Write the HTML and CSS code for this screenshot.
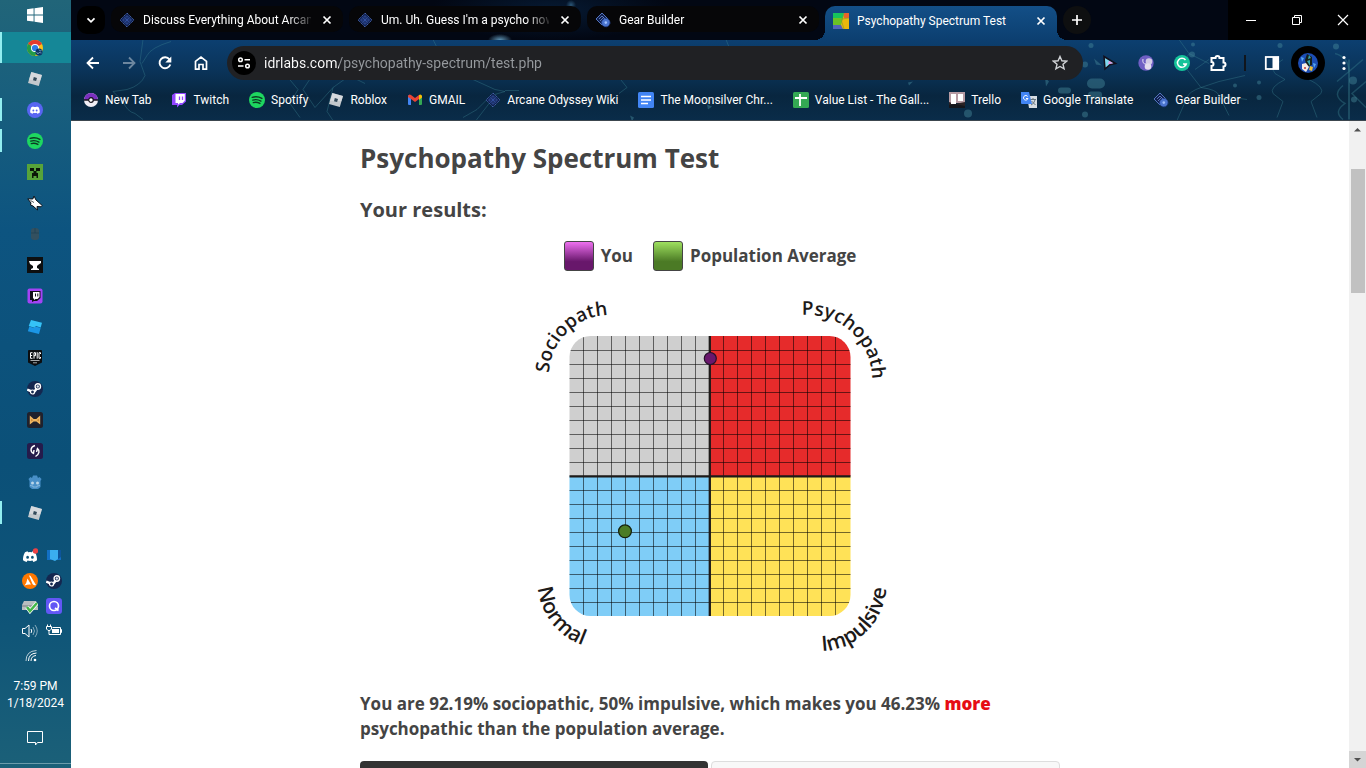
FILE: index.html
```html
<!DOCTYPE html>
<html lang="en">
<head>
    <meta charset="UTF-8">
    <meta name="viewport" content="width=device-width, initial-scale=1.0">
    <title>Psychopathy Spectrum Test</title>
    <link rel="stylesheet" href="styles.css">
</head>
<body>
    <!-- Shared icons -->
    <svg class="sprite" aria-hidden="true">
        <symbol id="i-arcane" viewBox="0 0 16 16">
            <path d="M8 1l7 7-7 7-7-7z" fill="#10204e" stroke="#4361a8" stroke-dasharray="1.5 .7"/>
            <path d="M8 3.5L12.5 8 8 12.5 3.5 8zM5.5 5.5l5 5m0-5l-5 5M8 4v8M4 8h8" fill="none" stroke="#3554a4" stroke-width=".8"/>
        </symbol>
        <symbol id="i-gear" viewBox="0 0 16 16">
            <path d="M7 1l6 6-6 6-6-6z" fill="#10204e" stroke="#5474bd"/>
            <path d="M4 7l3-3 3 3M5 9l4-4" fill="none" stroke="#6c8bd0" stroke-width=".8"/>
            <circle cx="10.8" cy="10.6" r="4.2" fill="#4a74cf" stroke="#24418d" stroke-dasharray="1.5 .8"/>
            <circle cx="10.8" cy="10.6" r="1.3" fill="#9fc0ff"/>
        </symbol>
        <symbol id="i-close" viewBox="0 0 16 16">
            <path d="M4.5 4.5l7 7m0-7l-7 7" stroke="#fff" stroke-width="1.7"/>
        </symbol>
        <symbol id="i-roblox" viewBox="0 0 16 16">
            <path d="M4.300 1L15 3.900 11.800 15 1 12z" fill="#c3c8cc"/>
            <path d="M4.300 1L15 3.900l-1.600 5.400L1.900 8.800z" fill="#e2e5e7" opacity=".6"/>
            <path d="M6.800 6l3.200.9-.9 3.100-3.100-.8z" fill="#334a5a"/>
        </symbol>
        <symbol id="i-spotify" viewBox="0 0 16 16">
            <circle cx="8" cy="8" r="8" fill="#1ed760"/>
            <path d="M3.200 5.400c3.300-1 6.800-.6 9.700 1M3.800 8.100c2.800-.8 5.700-.4 8.100 1M4.300 10.600c2.300-.6 4.600-.3 6.600.8" fill="none" stroke="#0b3b22" stroke-width="1.400" stroke-linecap="round"/>
        </symbol>
        <symbol id="i-twitch" viewBox="0 0 16 16">
            <path d="M1 3l3-2h11v8.500L11 13H8.500L6 15.500V13H1z" fill="#9146ff"/>
            <path d="M4.500 2h9.300v6.800l-2.300 2.200H9l-2 1.800V11H4.500z" fill="#fff"/>
            <path d="M8.500 4.500v3.500M11.500 4.500v3.500" stroke="#9146ff" stroke-width="1.300"/>
        </symbol>
        <symbol id="i-discord" viewBox="0 0 16 16">
            <path d="M5.500 2.800L3 3.800C1.400 6.300.9 9 1 11.700c1 .9 2.300 1.500 3.600 1.800l.9-1.500c1.600.5 3.400.5 5 0l.9 1.500c1.300-.3 2.600-.9 3.600-1.800.1-2.700-.4-5.400-2-7.900l-2.500-1-.6 1a9 9 0 0 0-3.800 0zM5.600 7.200a1.400 1.500 0 1 1 0 3 1.400 1.500 0 0 1 0-3zm4.800 0a1.400 1.500 0 1 1 0 3 1.400 1.500 0 0 1 0-3z" fill="#fff" fill-rule="evenodd"/>
        </symbol>
        <symbol id="i-steam" viewBox="0 0 16 16">
            <circle cx="8" cy="8" r="8" fill="#14274f"/>
            <path d="M.2 8.500l5 2.200 2.400-.4 3-3.700" fill="none" stroke="#fff" stroke-width="2.400"/>
            <circle cx="10.800" cy="5.500" r="2.700" fill="#14274f" stroke="#fff" stroke-width="1.400"/>
            <circle cx="10.800" cy="5.500" r="1.200" fill="#dfe7f0"/>
            <circle cx="5.500" cy="11" r="2" fill="#14274f" stroke="#fff" stroke-width="1.200"/>
        </symbol>
    </svg>

    <nav class="taskbar" aria-label="Taskbar">
        <button class="task start" aria-label="Start">
            <svg viewBox="0 0 16 16"><path d="M0 2.300L6.600 1.300v6.200H0zM7.500 1.200L16 0v7.500H7.500zM0 8.400h6.600v6.200L0 13.700zM7.500 8.400H16V16l-8.500-1.200z" fill="#fff"/></svg>
        </button>
        <button class="task current" aria-label="Google Chrome">
            <svg viewBox="0 0 16 16">
                <circle cx="8" cy="8" r="8" fill="#fbc116"/>
                <path d="M8 8L1.070 4A8 8 0 0 1 14.930 4z" fill="#e33b2e"/>
                <path d="M8 8L1.070 4A8 8 0 0 0 8 16l3.500-6z" fill="#229a4a"/>
                <circle cx="8" cy="8" r="4" fill="#fff"/><circle cx="8" cy="8" r="3.100" fill="#2f7de9"/>
                <circle cx="12" cy="12" r="3.500" fill="#0b3264"/>
                <path d="M9.500 12l1.500 2 1-1.500 2.500.5M12 9.500l1 1.500 1.500-.5" fill="none" stroke="#8fb6cc" stroke-width=".7"/>
            </svg>
        </button>
        <button class="task" aria-label="Roblox"><svg><use href="#i-roblox"/></svg></button>
        <button class="task open" aria-label="Discord">
            <svg viewBox="0 0 16 16"><circle cx="8" cy="8" r="8" fill="#5865f2"/><use href="#i-discord" x="2.500" y="2.500" width="11" height="11"/></svg>
        </button>
        <button class="task open" aria-label="Spotify"><svg><use href="#i-spotify"/></svg></button>
        <button class="task" aria-label="Minecraft">
            <svg viewBox="0 0 16 16"><path d="M0 0h16v16H0z" fill="#57a33a"/><path d="M3 4h4v3H3zM9 4h4v3H9zM6.500 7h3v2H11v5H9.500v-2h-3v2H5V9h1.500z" fill="#0b1508"/></svg>
        </button>
        <button class="task" aria-label="Wolf">
            <svg viewBox="0 0 16 16"><path d="M.8 3.800l5 .2L7 1l2 4 6.200 5.500-1.200 1.300-4-.3.500 3.500-4.500-4-2.500-1 .5-2z" fill="#fff" stroke="#0a0f16"/><path d="M3.500 5.500l3.500 2" stroke="#0a0f16" stroke-width=".7"/></svg>
        </button>
        <button class="task" aria-label="Mouse">
            <svg viewBox="0 0 16 16"><rect x="4" y="2" width="8" height="12" rx="3" fill="#33505f"/><path d="M4 7h8M8 2v5" stroke="#1b3c50" stroke-width=".6"/></svg>
        </button>
        <button class="task" aria-label="Anvil">
            <svg viewBox="0 0 16 16"><path d="M0 0h16v16H0z" fill="#0d0f10"/><path d="M2 4h12v2l-3 2-1 1v2l2 1v1H4v-1l2-1V9L3 7z" fill="#fff"/></svg>
        </button>
        <button class="task" aria-label="Twitch">
            <svg viewBox="0 0 16 16"><rect x=".5" y=".5" width="15" height="15" rx="2" fill="#a343f5"/><path d="M3 3h10.500v7L10 13H7l-2 1v-2H3z" fill="#101018"/><path d="M6 4h6.500v5l-2 2H8.500L7 12v-1.500H6z" fill="#fff"/><path d="M8.500 5.500v3M10.800 5.500v3" stroke="#101018"/></svg>
        </button>
        <button class="task" aria-label="Roblox Studio">
            <svg viewBox="0 0 16 16"><path d="M4 1l11 2.800-1.300 4.600-5-1.300-.5 1.800L1.700 7z" fill="#35c3f7"/><path d="M2.300 7.600l5 1.300.5-1.500 5.900 1.300L12 15 .9 12.200z" fill="#1b96e6"/></svg>
        </button>
        <button class="task" aria-label="Epic Games">
            <svg viewBox="0 0 16 16"><path d="M2 0h12q1 0 1 1v11.500L8 16l-7-3.500V1q0-1 1-1z" fill="#0c0e10"/><path d="M5.500 2.700h-2v5.600h2M3.500 5.500h1.700M7 8.700V2.700h1.500v3H7M10.200 2.200v6.500M13.500 4V2.700H12v5.600h1.500V7" fill="none" stroke="#fff"/><path d="M3.500 10.500h9M6 12.800h4" stroke="#a5a8aa"/></svg>
        </button>
        <button class="task" aria-label="Steam"><svg><use href="#i-steam"/></svg></button>
        <button class="task" aria-label="Mod manager">
            <svg viewBox="0 0 16 16"><rect width="16" height="16" rx="2.500" fill="#20212c"/><path d="M3.500 5v6l3-2.300h3l3 2.300V5l-3 2.700h-3z" fill="#c98538" stroke="#f0b660" stroke-width="1.400"/></svg>
        </button>
        <button class="task" aria-label="Streaming">
            <svg viewBox="0 0 16 16"><rect width="16" height="16" rx="2.500" fill="#251b4b"/><path d="M8 2.500C3 4 3 8.500 6.500 10.500L7 7M8.500 13.500c4-2.500 4.500-6 2-8L9.500 9" fill="none" stroke="#fff" stroke-width="1.400"/></svg>
        </button>
        <button class="task" aria-label="Godot">
            <svg viewBox="0 0 16 16"><path d="M1.500 5l2-2 1.500 1 1-2.500h4L11 4l1.500-1 2 2L13.500 7v6L11 15H5l-2.500-2V7z" fill="#488fc7"/><circle cx="5.500" cy="9" r="1.500" fill="#b9d5e8"/><circle cx="10.500" cy="9" r="1.500" fill="#b9d5e8"/><path d="M3 11.500l3 .5v1h4v-1l3-.5" fill="none" stroke="#8fbfdf" stroke-width=".8"/></svg>
        </button>
        <button class="task open" aria-label="Roblox Player"><svg><use href="#i-roblox"/></svg></button>

        <div class="tray">
            <svg viewBox="0 0 16 16"><use href="#i-discord" width="16" height="17"/><circle cx="13.500" cy="3" r="2.700" fill="#ed4245"/></svg>
            <svg viewBox="0 0 16 16"><path d="M1 2h14v10H1z" fill="#126fc4"/><path d="M4 2h8v9l-3 2-5-2z" fill="#3aaef0"/><path d="M12 2h3v7l-3 2z" fill="#0d549a"/></svg>
            <svg viewBox="0 0 16 16"><circle cx="8" cy="8" r="8" fill="#ff7800"/><path d="M7 2.500q1.500-.5 2.500 2L14 12q-2 .8-3.500-1zM5.500 5.500L9 11.500q-3-.5-6.500 1 2-2 3-7z" fill="#fff"/></svg>
            <svg><use href="#i-steam"/></svg>
            <svg viewBox="0 0 16 16"><path d="M2 3h12l2 4v5H0V7z" fill="#b9bdc0"/><path d="M0 8h16" stroke="#777c80"/><path d="M5 9l3 4 7-8" fill="none" stroke="#fff" stroke-width="4"/><path d="M5 9l3 4 7-8" fill="none" stroke="#44b749" stroke-width="2.600"/></svg>
            <svg viewBox="0 0 16 16"><rect width="16" height="16" rx="3" fill="#6257f5"/><circle cx="8" cy="8" r="4.500" fill="none" stroke="#fff" stroke-width="1.700"/><path d="M9 10l3.500 2.500" stroke="#fff" stroke-width="1.700"/></svg>
            <svg viewBox="0 0 16 16" fill="none" stroke="#fff"><path d="M.5 5.500h2.500l4-3.500v12l-4-3.500H.5z"/><path d="M9 6q1.500 2 0 4"/><path d="M11 4q3 4 0 8M13 2q4.500 6 0 12" opacity=".5"/></svg>
            <svg viewBox="0 0 16 16" fill="none" stroke="#fff"><path d="M6.500 4.500h8v7h-10M14.500 6.500h1v3h-1M1.500 1.500v2M4.500 1.500v2M.5 3.500h5V6L4 7.500H2L.5 6zM3 7.500v4h2"/><path d="M6 6h7v4H6z" fill="#fff" stroke="none"/></svg>
            <svg class="wifi" viewBox="0 0 16 16" fill="none" stroke="#fff"><circle cx="11" cy="12" r="1.300" fill="#fff" stroke="none"/><path d="M7 13q0-5 5-5.500M4.500 13q0-7.500 8-8"/><path d="M2 13Q2 3 12.500 2.500" opacity=".7"/></svg>
        </div>
        <div class="clock"><span>7:59 PM</span><span>1/18/2024</span></div>
        <button class="notify" aria-label="Notifications">
            <svg viewBox="0 0 16 16"><path d="M.5 1.500h15v11h-5L8.500 15v-2.500h-8z" fill="none" stroke="#fff"/></svg>
        </button>
    </nav>

    <div class="browser">
        <header class="chrome">
            <div class="tabs">
                <button class="round" aria-label="Search tabs"><svg viewBox="0 0 16 16"><path d="M4.500 6.300L8 9.800l3.500-3.500" fill="none" stroke="#fff" stroke-width="1.700"/></svg></button>
                <div class="tab">
                    <svg><use href="#i-arcane"/></svg>
                    <a href="#">Discuss Everything About Arcan</a>
                    <button aria-label="Close tab"><svg><use href="#i-close"/></svg></button>
                </div>
                <div class="tab">
                    <svg><use href="#i-arcane"/></svg>
                    <a href="#">Um. Uh. Guess I'm a psycho now</a>
                    <button aria-label="Close tab"><svg><use href="#i-close"/></svg></button>
                </div>
                <div class="tab">
                    <svg><use href="#i-gear"/></svg>
                    <a href="#">Gear Builder</a>
                    <button aria-label="Close tab"><svg><use href="#i-close"/></svg></button>
                </div>
                <div class="tab active">
                    <svg viewBox="0 0 16 16"><path d="M0 0h16v16H0z" fill="#e9b70c"/><path d="M0 0h11l-1 5H0z" fill="#16c45c"/><path d="M0 5h10l-2 7H0z" fill="#6bc224"/><path d="M0 12h8l2 4H0z" fill="#5264b8"/><path d="M11 0h5v5h-5z" fill="#e7632a"/><path d="M11 0L8.500 8l2.500 8M9 6l7-1" fill="none" stroke="#7e9634" stroke-width=".6"/></svg>
                    <a href="#">Psychopathy Spectrum Test</a>
                    <button aria-label="Close tab"><svg><use href="#i-close"/></svg></button>
                </div>
                <button class="round new-tab" aria-label="New tab"><svg viewBox="0 0 16 16"><path d="M8 3v10M3 8h10" stroke="#fff" stroke-width="1.700"/></svg></button>
                <div class="window-controls">
                    <button aria-label="Minimize"><svg viewBox="0 0 16 16"><path d="M3 8.500h10" stroke="#fff"/></svg></button>
                    <button aria-label="Restore"><svg viewBox="0 0 16 16" fill="none" stroke="#fff"><path d="M3.500 5.500h7v7h-7zM5.500 5.500v-2h7v7h-2"/></svg></button>
                    <button aria-label="Close window"><svg viewBox="0 0 16 16"><path d="M3 3l10 10m0-10L3 13" stroke="#fff" stroke-width="1.200"/></svg></button>
                </div>
            </div>

            <div class="bars">
                <!-- Theme artwork behind the toolbar -->
                <svg class="art" viewBox="0 0 1295 81" preserveAspectRatio="xMaxYMid slice" aria-hidden="true">
                    <g fill="none" stroke="#3a7f8f" stroke-opacity=".4">
                        <path d="M72 0l-3 22 5 14q-4 10-18 14l-14 2 10 10q4 10 12 12l8 6M100 2Q80 8 76 16l-5 8"/>
                        <path d="M217 38l10 12-8 14 10 14M240 38l-8 12 12 18 18-20 14-10M262 48l-6 24 6 9M362 0l4 8M282 38l12 6"/>
                        <path d="M402 40l22 10 10 2-14 4-14 14-14 8M434 51h14M405 81l20-26M548 38l8 10-8 6M655 0l4 10"/>
                        <path d="M1108 0l10 14q-6 8-2 16l14 18q-12 4-14 10l-10 23M1130 48q16 2 18 8l10 20M1130 48l18-6 26-6M1148 56l28 4M1118 14l20 10M1124 30l14-10"/>
                        <path d="M1212 20q-14 8-8 14l10 6q-16 8-12 14l10 8-6 16M1240 20q14 8 8 14l-10 6q16 8 12 14l-10 8 6 16"/>
                        <path d="M1264 14q14 4 14 18l-12 10M1292 20l-14 12M1272 46q-12 10 2 18q-12 8-2 16M1295 42l-14 12 14 14" stroke-width="1.500"/>
                        <path d="M1278 20v60" stroke-width="2"/>
                    </g>
                    <g fill="#48899b" fill-opacity=".45">
                        <rect x="1016" y="39" width="18" height="10" rx="5"/><rect x="1017" y="52" width="14" height="7" rx="3"/><rect x="987" y="48" width="13" height="6" rx="3"/>
                        <circle cx="1014" cy="25" r="3"/><circle cx="1020" cy="6" r="2.500"/><circle cx="1014" cy="75" r="3"/><circle cx="897" cy="74" r="4"/>
                        <circle cx="1121" cy="15" r="3"/><circle cx="1122" cy="5" r="2"/><circle cx="1188" cy="43" r="2"/><circle cx="1188" cy="58" r="2.500"/><circle cx="1164" cy="46" r="2"/>
                        <circle cx="1209" cy="6" r="2.500"/><circle cx="1282" cy="41" r="4"/><circle cx="1283" cy="60" r="3"/><circle cx="1265" cy="7" r="3"/>
                        <path d="M1023 19l8 7-6-1zM837 43l5-1-4 4zM974 38l4 4-3 5zM559 76l4 2-2 4zM636 65l5 2-4 3z"/>
                    </g>
                </svg>
                <div class="toolbar">
                    <button aria-label="Back"><svg viewBox="0 0 16 16"><path d="M14 8H3M8 2.500L2.500 8 8 13.500" fill="none" stroke="#fff" stroke-width="1.800"/></svg></button>
                    <button aria-label="Forward" class="dim"><svg viewBox="0 0 16 16"><path d="M2 8h11M8 2.500L13.500 8 8 13.500" fill="none" stroke="#fff" stroke-width="1.800"/></svg></button>
                    <button aria-label="Reload"><svg viewBox="0 0 16 16"><path d="M12.500 4.500A5.500 5.500 0 1 0 13.300 9.500" fill="none" stroke="#fff" stroke-width="1.900"/><path d="M14.300 1.500v6h-6z" fill="#fff"/></svg></button>
                    <button aria-label="Home"><svg viewBox="0 0 16 16"><path d="M2.500 14.200V6.300L8 2l5.500 4.300v7.900H10V9.500H6v4.700z" fill="none" stroke="#fff" stroke-width="1.700"/></svg></button>
                    <form class="omnibox">
                        <button type="button" class="site" aria-label="View site information"><svg viewBox="0 0 16 16" fill="none" stroke="#fff" stroke-width="1.500"><circle cx="4.500" cy="4.700" r="1.800"/><path d="M8.500 4.700H14M2 11h5.500"/><circle cx="11.500" cy="11" r="1.800"/></svg></button>
                        <input class="url" type="text" aria-label="Address" value="idrlabs.com/psychopathy-spectrum/test.php">
                        <button type="button" class="star" aria-label="Bookmark this tab"><svg viewBox="0 0 16 16"><path d="M8 1.500l1.900 4.300 4.700.4-3.600 3.100 1.100 4.600L8 11.500l-4.100 2.400L5 9.300 1.400 6.200l4.700-.4z" fill="none" stroke="#d0d3d6" stroke-width="1.400"/></svg></button>
                    </form>
                    <button aria-label="Cursor"><svg viewBox="0 0 16 16"><path d="M2 1.500l11.500 7-5.500 1.200L3 14z" fill="#7fd6ee" stroke="#13101d" stroke-width="1.500"/><path d="M6 9l5-.8-4-2.200z" fill="#ef8fe0"/></svg></button>
                    <button aria-label="Moon"><svg viewBox="0 0 16 16"><circle cx="8" cy="8" r="7.700" fill="#6f5fc4"/><path d="M5 4q-1 5 3 5" fill="none" stroke="#e7e3f6"/><circle cx="11" cy="6.500" r="3.300" fill="#d3cbe6"/><circle cx="10" cy="11.500" r="3.300" fill="#e3dcee"/></svg></button>
                    <button aria-label="Grammarly"><svg viewBox="0 0 16 16"><circle cx="8" cy="8" r="8" fill="#15c39a"/><path d="M11.500 5A4.500 4.500 0 1 0 12.300 9H9M10.500 10.500L12.400 8.800" fill="none" stroke="#fff" stroke-width="1.500"/></svg></button>
                    <button aria-label="Extensions"><svg class="puzzle" viewBox="0 0 18 18"><path d="M2.500 4h4a2 2 0 0 1 4 0h4v4.500a2 2 0 0 1 0 4V16h-12v-4a2 2 0 0 0 0-4z" fill="none" stroke="#fff" stroke-width="2"/></svg></button>
                    <span class="divider"></span>
                    <button aria-label="Side panel"><svg viewBox="0 0 16 16"><rect x="1.800" y="2" width="12.400" height="12" fill="none" stroke="#fff" stroke-width="1.800"/><path d="M8.500 2H14v12H8.500z" fill="#fff"/></svg></button>
                    <button aria-label="Profile" class="profile"><svg viewBox="0 0 20 20"><circle cx="10" cy="10" r="10" fill="#1c4db4"/><path d="M9 1l5 3v8l-5 2-2-7z" fill="#172019"/><path d="M11 2l2 3-3 1zM9 8l3-1v6z" fill="#36a6aa"/><path d="M3 4l3 1-2 4zM15 10l3 1-2 4z" fill="#58a8ee"/><path d="M4 11l4-1 3 4-3 5-4-3z" fill="#f4ece5"/><path d="M12 13l3 1-1 4-3-1z" fill="#edbf37"/><circle cx="7" cy="15" r="1" fill="#c33b36"/></svg></button>
                    <button aria-label="Menu"><svg viewBox="0 0 16 16" fill="#fff"><circle cx="8" cy="2.500" r="1.600"/><circle cx="8" cy="8" r="1.600"/><circle cx="8" cy="13.500" r="1.600"/></svg></button>
                </div>
                <nav class="bookmarks" aria-label="Bookmarks">
                    <a href="#"><svg viewBox="0 0 16 16"><circle cx="8" cy="8" r="7" fill="#f1eef5"/><path d="M1 8a7 7 0 0 1 14 0z" fill="#7b2fc0"/><path d="M1 8h14" stroke="#17131c" stroke-width="1.500"/><circle cx="8" cy="8" r="2.300" fill="#fff" stroke="#17131c" stroke-width="1.200"/></svg>New Tab</a>
                    <a href="#"><svg><use href="#i-twitch"/></svg>Twitch</a>
                    <a href="#"><svg><use href="#i-spotify"/></svg>Spotify</a>
                    <a href="#"><svg><use href="#i-roblox"/></svg>Roblox</a>
                    <a href="#"><svg viewBox="0 0 16 16"><path d="M1 3.500h3V13H2q-1 0-1-1z" fill="#4285f4"/><path d="M12 3.500h3V12q0 1-1 1h-2z" fill="#34a853"/><path d="M1 4q1-2.500 3-1l4 3 4-3v4L8 10 4 7 1 5z" fill="#ea4335"/><path d="M12 3q2-1.500 3 1v1.500L12 8z" fill="#fbbc04"/></svg>GMAIL</a>
                    <a href="#"><svg><use href="#i-arcane"/></svg>Arcane Odyssey Wiki</a>
                    <a href="#"><svg viewBox="0 0 16 16"><rect width="16" height="16" rx="1.500" fill="#4285f4"/><path d="M3 4.500h10M3 8h10M3 11.500h7" stroke="#fff" stroke-width="1.700"/></svg>The Moonsilver Chr...</a>
                    <a href="#"><svg viewBox="0 0 16 16"><rect width="16" height="16" rx="1.500" fill="#34a853"/><path d="M7 2v12M2 6h12" stroke="#fff" stroke-width="1.800"/></svg>Value List - The Gall...</a>
                    <a href="#"><svg viewBox="0 0 16 16"><path d="M0 0h16v11H0z" fill="#b69ba3"/><path d="M0 10l6 2 10-2v6H0z" fill="#2b2224"/><path d="M0 13l6-1 10 2v2H0z" fill="#14161c"/><path d="M2 2h5v10H2zM9 2h5v7H9z" fill="#fff"/></svg>Trello</a>
                    <a href="#"><svg viewBox="0 0 16 16"><path d="M6 4h10v12H8z" fill="#d7dde2"/><path d="M0 0h8l3 12H1q-1 0-1-1z" fill="#4285f4"/><path d="M6.700 4.500A2.300 2.300 0 1 0 7 6.500H5" fill="none" stroke="#fff"/><path d="M9.500 7.500H15M12 6v1.500M14 8q-1 4-4 5M10.500 9l4 4" fill="none" stroke="#66757f"/></svg>Google Translate</a>
                    <a href="#"><svg><use href="#i-gear"/></svg>Gear Builder</a>
                </nav>
            </div>
        </header>

        <div class="viewport">
            <main class="page">
                <h1>Psychopathy Spectrum Test</h1>
                <h2>Your results:</h2>
                <ul class="legend">
                    <li><span class="swatch you"></span>You</li>
                    <li><span class="swatch average"></span>Population Average</li>
                </ul>

                <svg class="chart" viewBox="520 290 380 370" role="img" aria-label="Result chart">
                    <defs>
                        <clipPath id="rounded"><rect x="569.500" y="336" width="281" height="280" rx="21"/></clipPath>
                        <path id="arc-tl" d="M549 373A61 61 0 0 1 614 315"/>
                        <path id="arc-tr" d="M802 315A65 65 0 0 1 872 386"/>
                        <path id="arc-bl" d="M538 588A67 67 0 0 0 594 648"/>
                        <path id="arc-br" d="M822 651A67 67 0 0 0 886 576"/>
                    </defs>
                    <g clip-path="url(#rounded)">
                        <path d="M569 336h141v140H569z" fill="#cfcfcf"/>
                        <path d="M710 336h141v140H710z" fill="#e62b2b"/>
                        <path d="M569 476h141v140H569z" fill="#7fcdf7"/>
                        <path d="M710 476h141v140H710z" fill="#ffe257"/>
                        <g stroke="#000" stroke-opacity=".55">
                            <path d="M583.500 336v280m14-280v280m14-280v280m14-280v280m14-280v280m14-280v280m14-280v280m14-280v280m14-280v280"/>
                            <path d="M723.500 336v280m14-280v280m14-280v280m14-280v280m14-280v280m14-280v280m14-280v280m14-280v280m14-280v280"/>
                            <path d="M569 350.500h282m-282 14h282m-282 14h282m-282 14h282m-282 14h282m-282 14h282m-282 14h282m-282 14h282m-282 14h282"/>
                            <path d="M569 490.500h282m-282 14h282m-282 14h282m-282 14h282m-282 14h282m-282 14h282m-282 14h282m-282 14h282m-282 14h282"/>
                        </g>
                        <path d="M709.800 336v280M569 476.300h282" stroke="#1d1a19" stroke-width="2.300"/>
                    </g>
                    <g class="chart-label">
                        <text><textPath href="#arc-tl">Sociopath</textPath></text>
                        <text><textPath href="#arc-tr">Psychopath</textPath></text>
                    </g>
                    <g class="chart-label lower">
                        <text><textPath href="#arc-bl">Normal</textPath></text>
                        <text><textPath href="#arc-br">Impulsive</textPath></text>
                    </g>
                    <circle cx="710.300" cy="358.500" r="6" fill="#6a176d" stroke="#26102a" stroke-width="1.200"/>
                    <circle cx="625" cy="531.300" r="6.400" fill="#4b7c26" stroke="#15200c" stroke-width="1.200"/>
                </svg>

                <p class="summary">You are 92.19% sociopathic, 50% impulsive, which makes you 46.23% <strong>more</strong> psychopathic than the population average.</p>
                <div class="actions">
                    <span class="action dark"></span>
                    <span class="action light"></span>
                </div>
            </main>
            <div class="scrollbar" aria-hidden="true">
                <svg viewBox="0 0 17 17"><path d="M5 10.500L8.500 7l3.500 3.500z" fill="#505050"/></svg>
                <div class="track"><div class="thumb"></div></div>
                <svg class="down" viewBox="0 0 17 17"><path d="M5 7l3.500 3.500L12 7z" fill="#505050"/></svg>
            </div>
        </div>
    </div>
</body>
</html>
```
FILE: styles.css
```css
* {
    box-sizing: border-box;
    margin: 0;
    padding: 0;
}

body {
    display: flex;
    height: 100vh;
    overflow: hidden;
    font-family: Roboto, 'Open Sans', sans-serif;
    font-size: 12px;
    color: #fff;
    background: #fff;
}

button {
    border: none;
    background: none;
    display: flex;
    align-items: center;
    justify-content: center;
    flex-shrink: 0;
    cursor: pointer;
}

a {
    color: inherit;
    text-decoration: none;
}

svg {
    display: block;
    width: 16px;
    height: 16px;
    flex-shrink: 0;
}

.sprite {
    position: absolute;
    width: 0;
    height: 0;
}

/* Taskbar */
.taskbar {
    width: 71px;
    flex-shrink: 0;
    display: flex;
    flex-direction: column;
    background: linear-gradient(#216579, #195f7d 12%, #0d5480 30%, #0b5078 60%, #0e5478 80%, #1b6078);
}

.task {
    height: 31px;
    padding-right: 1px;
    border-left: 2px solid transparent;
    border-right: 2px solid transparent;
}

.task.start {
    height: 32px;
    padding-bottom: 2px;
}

.task.open {
    border-image: linear-gradient(transparent 4px, #92eef0 4px, #92eef0 27px, transparent 27px) 0 0 0 2;
}

.task.current {
    background: #158797;
    border-left-color: #92eef0;
}

.tray {
    display: grid;
    grid-template-columns: 16px 16px;
    gap: 9px 8px;
    padding: 20px 0 0 22px;
}

.wifi {
    margin-left: 2px;
}

.clock {
    display: flex;
    flex-direction: column;
    align-items: center;
    margin-top: 14px;
    line-height: 17px;
}

.notify {
    flex: 1;
    margin-bottom: 4px;
    padding-right: 1px;
    border-bottom: 1px solid #6b9cab;
}

/* Browser frame */
.browser {
    flex: 1;
    min-width: 0;
    display: flex;
    flex-direction: column;
}

.tabs {
    height: 40px;
    display: flex;
    gap: 6px;
    padding: 6px 0 0 6px;
    background:
        radial-gradient(ellipse 12px 6px at 429px 40px, #5d93b5, transparent),
        radial-gradient(circle 5px at 500px 5px, #2b5677, transparent),
        radial-gradient(ellipse 120px 30px at 480px 10px, #061a33, transparent),
        #020713;
}

.round {
    width: 28px;
    height: 28px;
    border-radius: 10px;
    background: #000;
}

.new-tab {
    border-radius: 14px;
    background: #0e0f10;
}

.tab {
    width: 232px;
    height: 26px;
    min-width: 0;
    display: flex;
    align-items: center;
    gap: 8px;
    padding: 2px 8px 0 8px;
    border-radius: 10px;
    background: #060608;
}

.tab a {
    flex: 1;
    overflow: hidden;
    white-space: nowrap;
    -webkit-mask-image: linear-gradient(90deg, #000 145px, transparent 172px);
    mask-image: linear-gradient(90deg, #000 145px, transparent 172px);
}

.tab.active {
    position: relative;
    height: 34px;
    padding-bottom: 6px;
    border-radius: 10px 10px 0 0;
    background: linear-gradient(#134f87, #0c3f70);
}

.tab.active a {
    -webkit-mask-image: none;
    mask-image: none;
}

.tab.active::before,
.tab.active::after {
    content: "";
    position: absolute;
    bottom: 0;
    width: 10px;
    height: 10px;
}

.tab.active::before {
    right: 100%;
    background: radial-gradient(circle at 0 0, transparent 10px, #0c3f70 10px);
}

.tab.active::after {
    left: 100%;
    background: radial-gradient(circle at 100% 0, transparent 10px, #0c3f70 10px);
}

.window-controls {
    display: flex;
    margin: -6px 0 0 auto;
}

.window-controls button {
    width: 46px;
    height: 40px;
    background: #000;
}

/* Toolbar and bookmarks share one backdrop */
.bars {
    position: relative;
    height: 81px;
    border-bottom: 1px solid #3c464e;
    background: linear-gradient(#0c3f70, #0a3358 40%, #08263f 70%, #0a2c49);
}

.art {
    position: absolute;
    inset: 0;
    width: 100%;
    height: 100%;
}

.toolbar {
    position: relative;
    height: 46px;
    display: flex;
    align-items: center;
    padding: 0 4px;
}

.toolbar button {
    width: 36px;
    height: 34px;
}

.toolbar .dim {
    opacity: .4;
}

.omnibox {
    flex: 1;
    display: flex;
    align-items: center;
    height: 34px;
    margin: 0 9px 0 8px;
    padding: 0 5px;
    border-radius: 17px;
    background: #202124;
}

.omnibox .site {
    width: 24px;
    height: 24px;
    border-radius: 12px;
    background: #000;
}

.omnibox .star {
    width: 36px;
}

.url {
    flex: 1;
    border: none;
    outline: none;
    margin-left: 8px;
    font: inherit;
    font-size: 14px;
    color: transparent;
    background: linear-gradient(90deg, #fff 75px, #969a9e 75px);
    -webkit-background-clip: text;
    background-clip: text;
}

.toolbar .puzzle {
    width: 18px;
    height: 18px;
}

.divider {
    width: 2px;
    height: 16px;
    margin: 0 8px;
    background: #10151c;
}

.toolbar .profile {
    width: 34px;
    margin: 0 1px;
    border-radius: 17px;
    background: #000;
}

.profile svg {
    width: 20px;
    height: 20px;
}

.bookmarks {
    position: relative;
    height: 28px;
    display: flex;
    align-items: center;
    gap: 20px;
    padding-left: 12px;
    white-space: nowrap;
}

.bookmarks a {
    display: flex;
    align-items: center;
    gap: 6px;
}

/* Page */
.viewport {
    flex: 1;
    min-height: 0;
    display: flex;
    overflow: hidden;
    font-family: 'Open Sans', sans-serif;
}

.page {
    width: 100%;
    max-width: 700px;
    margin: 0 auto;
    padding-top: 18px;
    color: #444;
    font-weight: bold;
}

h1 {
    font-size: 26px;
    line-height: 38px;
}

h2 {
    margin-top: 19px;
    font-size: 20px;
    line-height: 28px;
}

.legend {
    display: flex;
    justify-content: center;
    gap: 20px;
    margin-top: 17px;
    list-style: none;
    font-size: 17px;
    line-height: 30px;
}

.legend li {
    display: flex;
    align-items: center;
    gap: 7px;
}

.swatch {
    width: 30px;
    height: 30px;
    border: 1px solid #444;
    border-radius: 3px;
}

.you {
    background: linear-gradient(#ee70f0, #68176b 70%);
}

.average {
    background: linear-gradient(#9ee05f, #4b7a25 70%);
}

.chart {
    width: 380px;
    height: 370px;
    margin: 19px auto 0;
}

.chart-label {
    font-size: 19px;
    font-weight: 600;
    fill: #1d1a19;
}

.lower {
    font-size: 21px;
}

.summary {
    margin-top: 31px;
    font-size: 17px;
    line-height: 25px;
}

.summary strong {
    color: #e60d14;
}

.actions {
    display: flex;
    gap: 3px;
    margin-top: 20px;
}

.action {
    flex: 1;
    height: 40px;
    border-radius: 4px;
}

.dark {
    background: #333;
}

.light {
    border: 1px solid #ddd;
    background: #f8f8f8;
}

.scrollbar {
    width: 17px;
    display: flex;
    flex-direction: column;
    background: #f1f1f1;
}

.scrollbar svg {
    width: 17px;
    height: 17px;
}

.scrollbar .down {
    background: #d5d5d5;
}

.track {
    flex: 1;
    padding: 31px 1px 0 2px;
}

.thumb {
    height: 124px;
    background: #c1c1c1;
}
```
